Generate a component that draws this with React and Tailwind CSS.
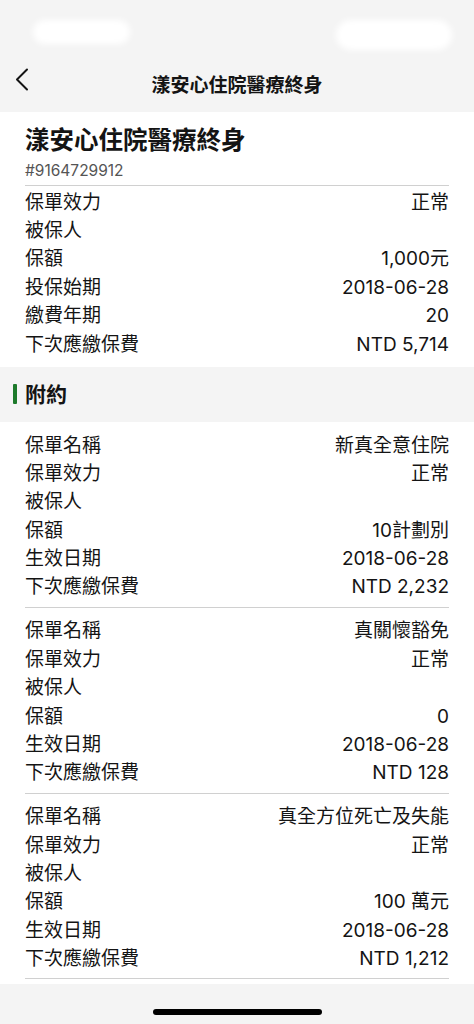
const mainRows = [
    ['保單效力', '正常'],
    ['被保人', ''],
    ['保額', '1,000元'],
    ['投保始期', '2018-06-28'],
    ['繳費年期', '20'],
    ['下次應繳保費', 'NTD 5,714'],
];

const riders = [
    [
        ['保單名稱', '新真全意住院'],
        ['保單效力', '正常'],
        ['被保人', ''],
        ['保額', '10計劃別'],
        ['生效日期', '2018-06-28'],
        ['下次應繳保費', 'NTD 2,232'],
    ],
    [
        ['保單名稱', '真關懷豁免'],
        ['保單效力', '正常'],
        ['被保人', ''],
        ['保額', '0'],
        ['生效日期', '2018-06-28'],
        ['下次應繳保費', 'NTD 128'],
    ],
    [
        ['保單名稱', '真全方位死亡及失能'],
        ['保單效力', '正常'],
        ['被保人', ''],
        ['保額', '100 萬元'],
        ['生效日期', '2018-06-28'],
        ['下次應繳保費', 'NTD 1,212'],
    ],
];

function Row({ label, value }) {
    return (
        <div className="flex items-center justify-between h-[28.4px] text-[19px] leading-none text-[#141414]">
            <span>{label}</span>
            <span>{value}</span>
        </div>
    );
}

export default function App() {
    return (
        <div className="w-[474px] h-[1024px] bg-white flex flex-col overflow-hidden" style={{ fontFamily: 'Inter, "Noto Sans CJK TC", sans-serif' }}>

            {/* ── Status + nav ── */}
            <div className="bg-[#f4f4f4] h-[112px] flex flex-col shrink-0">
                <div className="h-[62px] flex justify-between items-start px-[33px] pt-[20px]">
                    <div className="w-[97px] h-[24px] rounded-full bg-white blur-[3px]" />
                    <div className="w-[116px] h-[30px] rounded-full bg-white blur-[3px] -mr-[11px]" />
                </div>
                <div className="relative flex-1 flex items-center justify-center pb-[6px]">
                    <svg className="absolute left-[15px] top-[6px] w-[14px] h-[23px]" viewBox="0 0 14 23" fill="none" stroke="#141414" strokeWidth="2" strokeLinecap="round" strokeLinejoin="round">
                        <path d="M12 1.5L2 11.5l10 10" />
                    </svg>
                    <h1 className="text-[19px] font-semibold text-[#141414] leading-none pt-[2px]">漾安心住院醫療終身</h1>
                </div>
            </div>

            {/* ── Main policy ── */}
            <div className="px-[25px] pt-[16px]">
                <h2 className="text-[24.5px] font-bold leading-none text-[#141414]">漾安心住院醫療終身</h2>
                <p className="text-[15.5px] text-[#555] leading-none mt-[10px]">#9164729912</p>
                <div className="border-t border-[#d0d0d0] mt-[7px] pt-[2px] pb-[8.5px]">
                    {mainRows.map(([l, v]) => <Row key={l} label={l} value={v} />)}
                </div>
            </div>

            {/* ── Riders header ── */}
            <div className="bg-[#f4f4f4] h-[55px] flex items-center gap-[8px] px-[13px] shrink-0">
                <div className="w-[4px] h-[20px] bg-[#1d7a2b] rounded-[1px]" />
                <span className="text-[21px] font-bold text-[#141414] leading-none">附約</span>
            </div>

            {/* ── Riders ── */}
            <div className="px-[25px]">
                {riders.map((rows, i) => (
                    <div key={i} className="border-b border-[#d0d0d0] pt-[9px] pb-[5.5px]">
                        {rows.map(([l, v]) => <Row key={l} label={l} value={v} />)}
                    </div>
                ))}
            </div>

            {/* ── Bottom ── */}
            <div className="mt-[5px] flex-1 bg-[#f4f4f4] flex justify-center pt-[25px]">
                <div className="w-[169px] h-[6px] rounded-full bg-black" />
            </div>
        </div>
    );
}
